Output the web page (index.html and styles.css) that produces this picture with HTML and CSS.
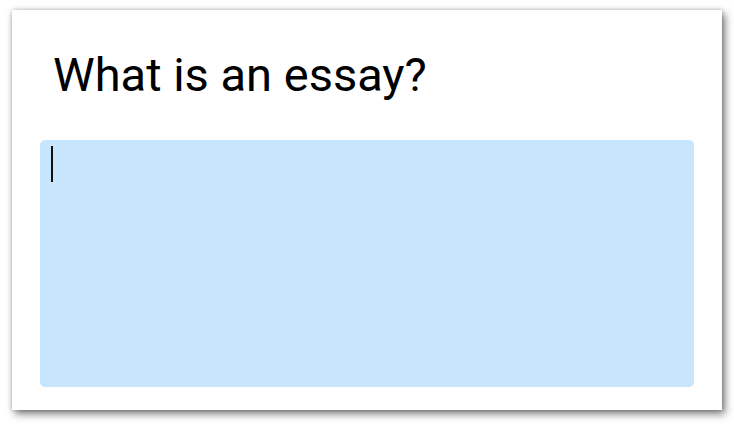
FILE: index.html
```html
<!DOCTYPE html>
<html>
<head>
<meta charset="utf-8">
<link rel="stylesheet" href="styles.css">
</head>
<body>
<div class="card">
  <h1 class="title">What is an essay?</h1>
  <div class="answer"><span class="caret"></span></div>
</div>
</body>
</html>
```
FILE: styles.css
```css
html, body {
  margin: 0;
  padding: 0;
  background: #ffffff;
}
body {
  width: 734px;
  height: 424px;
  overflow: hidden;
  font-family: Roboto, "Liberation Sans", sans-serif;
}
.card {
  box-sizing: border-box;
  margin: 10px 0 0 12px;
  width: 710px;
  height: 400px;
  background: #ffffff;
  box-shadow: 3px 4px 8px rgba(0, 0, 0, 0.5), 0 0 4px rgba(0, 0, 0, 0.25);
  padding: 37px 28px 23px 28px;
  display: flex;
  flex-direction: column;
}
.title {
  margin: 0 0 0 13px;
  font-weight: 400;
  font-size: 47px;
  line-height: 56px;
  color: #000000;
}
.answer {
  margin-top: 37px;
  flex: 1;
  background: #c7e5fc;
  border-radius: 5px;
  padding: 6px 0 0 11px;
}
.caret {
  display: block;
  width: 2px;
  height: 36px;
  background: #111111;
}
```
